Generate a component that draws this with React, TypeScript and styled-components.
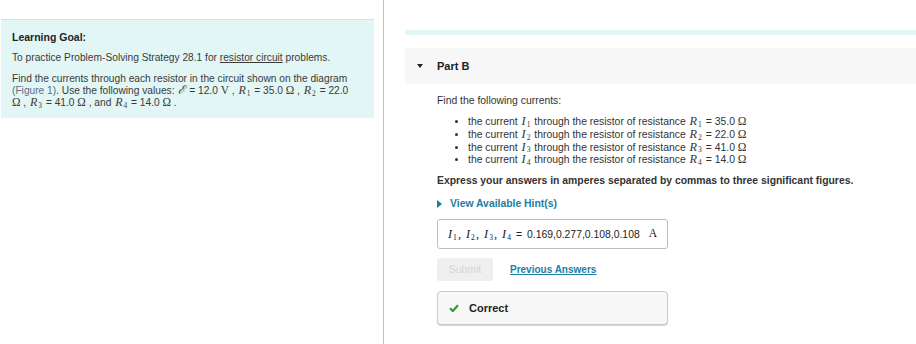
import React from "react";
import styled, { createGlobalStyle } from "styled-components";

const Global = createGlobalStyle`
  html, body { margin: 0; padding: 0; background: #fff; }
  body { font-family: "Liberation Sans", Arial, sans-serif; color: #333; }
`;

const OHM = "\u03A9";
const EMF = "\u2130";

const Page = styled.div`
  display: flex;
  width: 916px;
  height: 344px;
  overflow: hidden;
`;

const LeftCol = styled.div`
  width: 383px;
  padding-top: 19px;
`;

const GoalPanel = styled.div`
  margin-left: 1px;
  width: 345px;
  background: #e2f6f6;
  border-top: 1px solid #d9dee2;
  padding: 11px 17px 9px 11px;
  font-size: 10.2px;
  line-height: 12px;
  color: #3a3a3a;
`;

const GoalTitle = styled.div`
  font-weight: bold;
  font-size: 10.5px;
  color: #222;
  margin-bottom: 9px;
`;

const Para = styled.p<{ $gap?: number }>`
  margin: 0 0 ${(p) => p.$gap ?? 0}px 0;
`;

const Under = styled.span`
  text-decoration: underline;
`;

const FigLink = styled.span`
  color: #5d6f80;
`;

const Divider = styled.div`
  width: 1px;
  height: 344px;
  background: #afc7dc;
`;

const RightCol = styled.div`
  flex: 1;
  padding-left: 21px;
`;

const TopBar = styled.div`
  margin-top: 30px;
  height: 5px;
  background: #e2f6f6;
`;

const PartHeader = styled.div`
  margin-top: 13px;
  height: 36px;
  background: #f7f7f7;
  display: flex;
  align-items: center;
  padding-left: 12px;
  font-size: 11px;
  font-weight: bold;
  color: #222;
`;

const Caret = styled.span<{ $dir: "down" | "right"; $color: string }>`
  display: inline-block;
  width: 0;
  height: 0;
  ${(p) =>
    p.$dir === "down"
      ? `border-left: 3.5px solid transparent; border-right: 3.5px solid transparent; border-top: 4px solid ${p.$color};`
      : `border-top: 4px solid transparent; border-bottom: 4px solid transparent; border-left: 5px solid ${p.$color};`}
`;

const HeaderText = styled.span`
  margin-left: 14px;
`;

const PartBody = styled.div`
  padding-left: 32px;
  padding-top: 10px;
  font-size: 10.4px;
  line-height: 13px;
  color: #333;
`;

const Bullets = styled.ul`
  margin: 9px 0 0 0;
  padding-left: 31px;
  li {
    height: 12.8px;
    line-height: 12.8px;
  }
`;

const Strong = styled.div`
  margin-top: 7px;
  font-weight: bold;
  color: #333;
`;

const HintRow = styled.div`
  margin-top: 10px;
  display: flex;
  align-items: center;
  font-weight: bold;
  color: #1c7ea3;
`;

const HintText = styled.span`
  margin-left: 8px;
`;

const AnswerBox = styled.div`
  margin-top: 9px;
  width: 220px;
  height: 28px;
  border: 1px solid #bdbdbd;
  border-radius: 3px;
  display: flex;
  align-items: center;
  padding-left: 9px;
  color: #222;
`;

const Comma = styled.span`
  font-family: "Liberation Serif", "Times New Roman", serif;
  font-size: 1.2em;
  margin-right: 4px;
`;

const Eq = styled.span`
  margin-left: 4px;
`;

const Value = styled.span`
  margin-left: 5px;
  margin-right: 9px;
  font-size: 10.4px;
`;

const Actions = styled.div`
  margin-top: 9px;
  display: flex;
  align-items: center;
`;

const SubmitBtn = styled.button`
  width: 56px;
  height: 23px;
  border: none;
  border-radius: 2px;
  background: #efefef;
  color: #d6d6d6;
  font-family: "Liberation Sans", Arial, sans-serif;
  font-size: 10.4px;
  padding: 0;
`;

const PrevLink = styled.span`
  margin-left: 17px;
  font-weight: bold;
  font-size: 10px;
  color: #1c7ea3;
  text-decoration: underline;
`;

const CorrectBox = styled.div`
  margin-top: 10px;
  width: 218px;
  height: 32px;
  border: 1px solid #cacaca;
  border-radius: 4px;
  background: #f7f7f7;
  box-shadow: 0 1px 1px rgba(0, 0, 0, 0.18);
  display: flex;
  align-items: center;
  padding-left: 11px;
  font-size: 11px;
  font-weight: bold;
  color: #222;
`;

const CorrectText = styled.span`
  margin-left: 10px;
`;

const M = styled.span`
  font-family: "Liberation Serif", "Times New Roman", serif;
  font-style: italic;
  font-size: 1.18em;
  line-height: 10px;
  margin: 0 1px;
`;

const Up = styled.span`
  font-family: "Liberation Serif", "Times New Roman", serif;
  font-size: 1.12em;
  line-height: 10px;
`;

const Sub = styled.sub`
  font-family: "Liberation Serif", "Times New Roman", serif;
  font-style: normal;
  font-size: 0.62em;
  line-height: 0;
  vertical-align: -0.25em;
  margin-left: 1px;
`;

const Sym = ({ s, n }: { s: string; n: number }) => (
  <M>
    {s}
    <Sub>{n}</Sub>
  </M>
);

const Ohm = () => <Up>{OHM}</Up>;

const Check = () => (
  <svg width="10" height="8" viewBox="0 0 10 8">
    <path d="M1 4.2 L3.8 7 L9 1.2" fill="none" stroke="#2f9a3c" strokeWidth="2.2" />
  </svg>
);

const currents = [
  { n: 1, r: "35.0" },
  { n: 2, r: "22.0" },
  { n: 3, r: "41.0" },
  { n: 4, r: "14.0" },
];

export default function App() {
  return (
    <>
      <Global />
      <Page>
        <LeftCol>
          <GoalPanel>
            <GoalTitle>Learning Goal:</GoalTitle>
            <Para $gap={9}>
              To practice Problem-Solving Strategy 28.1 for <Under>resistor circuit</Under> problems.
            </Para>
            <Para>
              Find the currents through each resistor in the circuit shown on the diagram{" "}
              <FigLink>(Figure 1)</FigLink>. Use the following values: <M>{EMF}</M> = 12.0 <Up>V</Up> ,{" "}
              <Sym s="R" n={1} /> = 35.0 <Ohm /> , <Sym s="R" n={2} /> = 22.0 <Ohm /> ,{" "}
              <Sym s="R" n={3} /> = 41.0 <Ohm /> , and <Sym s="R" n={4} /> = 14.0 <Ohm /> .
            </Para>
          </GoalPanel>
        </LeftCol>
        <Divider />
        <RightCol>
          <TopBar />
          <PartHeader>
            <Caret $dir="down" $color="#222" />
            <HeaderText>Part B</HeaderText>
          </PartHeader>
          <PartBody>
            <div>Find the following currents:</div>
            <Bullets>
              {currents.map((c) => (
                <li key={c.n}>
                  the current <Sym s="I" n={c.n} /> through the resistor of resistance{" "}
                  <Sym s="R" n={c.n} /> = {c.r} <Ohm />
                </li>
              ))}
            </Bullets>
            <Strong>Express your answers in amperes separated by commas to three significant figures.</Strong>
            <HintRow>
              <Caret $dir="right" $color="#1c7ea3" />
              <HintText>View Available Hint(s)</HintText>
            </HintRow>
            <AnswerBox>
              <Sym s="I" n={1} />
              <Comma>,</Comma>
              <Sym s="I" n={2} />
              <Comma>,</Comma>
              <Sym s="I" n={3} />
              <Comma>,</Comma>
              <Sym s="I" n={4} />
              <Eq>=</Eq>
              <Value>0.169,0.277,0.108,0.108</Value>
              <Up>A</Up>
            </AnswerBox>
            <Actions>
              <SubmitBtn>Submit</SubmitBtn>
              <PrevLink>Previous Answers</PrevLink>
            </Actions>
            <CorrectBox>
              <Check />
              <CorrectText>Correct</CorrectText>
            </CorrectBox>
          </PartBody>
        </RightCol>
      </Page>
    </>
  );
}
